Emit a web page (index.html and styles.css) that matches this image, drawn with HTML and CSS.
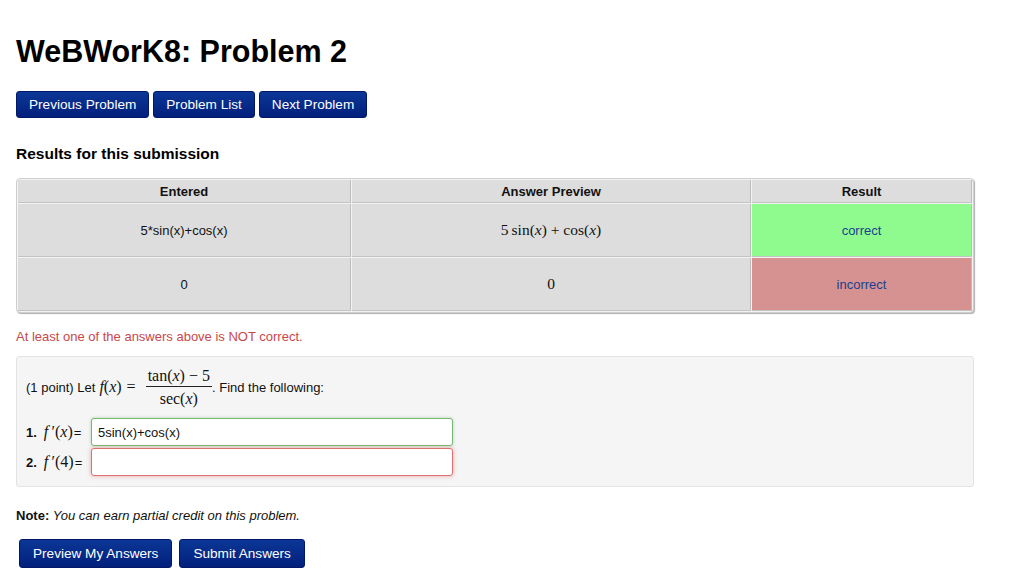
FILE: index.html
```html
<!DOCTYPE html>
<html>
<head>
<meta charset="utf-8">
<link rel="stylesheet" href="styles.css">
</head>
<body>
<h1 class="title">WeBWorK8: Problem 2</h1>
<div class="nav">
  <a class="btn nav-btn">Previous Problem</a>
  <a class="btn nav-btn">Problem List</a>
  <a class="btn nav-btn">Next Problem</a>
</div>
<h2 class="results-head">Results for this submission</h2>
<table class="results">
  <tr class="hrow">
    <th class="c1">Entered</th>
    <th class="c2">Answer Preview</th>
    <th class="c3">Result</th>
  </tr>
  <tr class="arow">
    <td>5*sin(x)+cos(x)</td>
    <td class="math">5&thinsp;sin(<i>x</i>) + cos(<i>x</i>)</td>
    <td class="ok">correct</td>
  </tr>
  <tr class="arow">
    <td>0</td>
    <td class="math">0</td>
    <td class="bad">incorrect</td>
  </tr>
</table>
<p class="msg">At least one of the answers above is NOT correct.</p>
<div class="problem">
  <div class="stmt">
    <span>(1 point) Let</span>
    <span class="m"><i>f</i>(<i>x</i>)<span class="eq">=</span></span>
    <span class="frac"><span class="num">tan(<i>x</i>) − 5</span><span class="den">sec(<i>x</i>)</span></span><span class="after">. Find the following:</span>
  </div>
  <div class="ans">
    <span class="lbl"><b>1.</b><span class="m"><i>f</i>&thinsp;′(<i>x</i>)</span><span class="eqs">=</span></span>
    <span class="inp good">5sin(x)+cos(x)</span>
  </div>
  <div class="ans">
    <span class="lbl"><b>2.</b><span class="m"><i>f</i>&thinsp;′(4)</span><span class="eqs">=</span></span>
    <span class="inp wrong"></span>
  </div>
</div>
<p class="note"><b>Note:</b> <i>You can earn partial credit on this problem.</i></p>
<div class="actions">
  <a class="btn act-btn">Preview My Answers</a>
  <a class="btn act-btn">Submit Answers</a>
</div>
</body>
</html>
```
FILE: styles.css
```css
html, body {
  margin: 0;
  padding: 0;
  background: #fff;
}
body {
  padding: 0 16px;
  font-family: "Liberation Sans", Arial, sans-serif;
  color: #111;
  font-size: 13px;
}
.title {
  margin: 35px 0 0;
  font-size: 30.5px;
  line-height: 33px;
  font-weight: bold;
  color: #000;
}
.nav {
  margin-top: 23px;
  display: flex;
  gap: 4px;
}
.btn {
  display: inline-flex;
  align-items: center;
  justify-content: center;
  box-sizing: border-box;
  height: 27px;
  padding: 0 12px;
  color: #fff;
  font-size: 13.6px;
  background: linear-gradient(#0b3796, #021f7c);
  border: 1px solid #02196a;
  border-radius: 3px;
  text-decoration: none;
}
.results-head {
  margin: 26px 0 0;
  font-size: 15.5px;
  line-height: 19px;
  font-weight: bold;
  color: #000;
}
.results {
  margin-top: 15px;
  width: 958px;
  border-collapse: separate;
  border-spacing: 1px;
  background: #f2f2f2;
  border: 1px solid #cfcfcf;
  border-radius: 4px;
  box-shadow: 1px 1px 1px #b0b0b0;
  text-align: center;
}
.results th, .results td {
  background: #dddddd;
  border-right: 1px solid #bdbdbd;
  border-bottom: 1px solid #c4c4c4;
  padding: 0;
}
.results th {
  height: 22px;
  font-size: 13px;
  font-weight: bold;
  color: #111;
}
.c1 { width: 332px; }
.c2 { width: 398px; }
.arow td {
  height: 52px;
  font-size: 13px;
}
.results td.math {
  font-family: "Liberation Serif", "Times New Roman", serif;
  font-size: 15.5px;
}
.results td.ok {
  background: #8ffb8f;
  color: #1a3f8f;
}
.results td.bad {
  background: #d69191;
  color: #1a3f8f;
}
.msg {
  margin: 16px 0 0;
  line-height: 16px;
  color: #c9474a;
}
.problem {
  margin-top: 11px;
  box-sizing: border-box;
  width: 958px;
  background: #f5f5f5;
  border: 1px solid #e3e3e3;
  border-radius: 3px;
  padding: 10px 9px 10px;
}
.stmt {
  display: flex;
  align-items: center;
  height: 40px;
}
.stmt > span + span { margin-left: 4px; }
.stmt > span.after { margin-left: 0; }
.m {
  font-family: "Liberation Serif", "Times New Roman", serif;
  font-size: 16px;
}
.eq {
  margin: 0 6px 0 5px;
}
.frac {
  display: inline-flex;
  flex-direction: column;
  align-items: center;
  font-family: "Liberation Serif", "Times New Roman", serif;
  font-size: 16px;
  line-height: 19px;
}
.num {
  border-bottom: 1px solid #222;
  padding: 0 2px 1px;
}
.den {
  padding-top: 2px;
}
.ans {
  display: flex;
  align-items: center;
  height: 28px;
}
.ans + .ans { margin-top: 2px; }
.stmt + .ans { margin-top: 11px; }
.lbl {
  display: inline-flex;
  align-items: center;
  width: 65px;
}
.lbl b { margin-right: 7px; }
.lbl .m { margin-right: 1px; }
.inp {
  box-sizing: border-box;
  width: 362px;
  height: 28px;
  background: #fff;
  border-radius: 3px;
  padding: 0 6px;
  display: flex;
  align-items: center;
  font-size: 13px;
  color: #111;
}
.inp.good {
  border: 1px solid #79b978;
  box-shadow: 0 0 3px rgba(100, 180, 100, 0.5);
}
.inp.wrong {
  border: 1px solid #df6e6e;
  box-shadow: 0 0 4px rgba(220, 100, 100, 0.5);
}
.note {
  margin: 21px 0 0;
  line-height: 16px;
  color: #111;
}
.actions {
  margin: 15px 0 0 3px;
  display: flex;
  gap: 7px;
}
.act-btn {
  height: 29px;
  padding: 0 13px;
}
```
